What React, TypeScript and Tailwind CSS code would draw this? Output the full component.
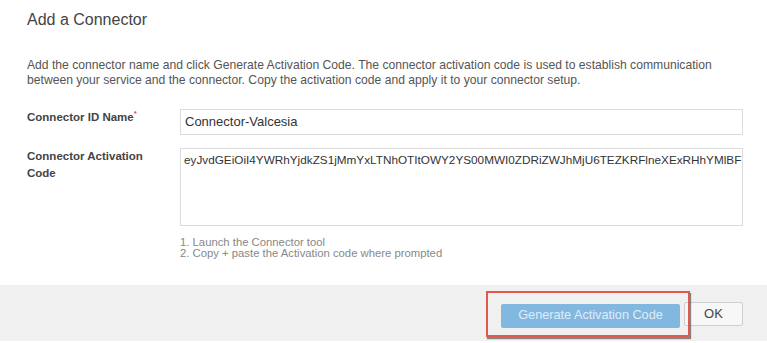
export default function App() {
  return (
    <div
      className="w-[767px] h-[343px] bg-white flex flex-col overflow-hidden"
      style={{ fontFamily: '"Liberation Sans", Arial, sans-serif' }}
    >
      <div className="pl-[27px] pr-[24px] flex-1">
        <h1 className="text-[16px] leading-[20px] text-[#444] pt-[10px]">Add a Connector</h1>
        <p className="mt-[28px] text-[12.15px] leading-[15px] text-[#555] w-[716px]">
          Add the connector name and click Generate Activation Code. The connector activation code is used to establish communication between your service and the connector. Copy the activation code and apply it to your connector setup.
        </p>
        <div className="mt-[21px] flex">
          <div className="w-[153px] shrink-0 text-[11.5px] leading-[17px] font-bold text-[#444]">
            Connector ID Name<span className="text-[#d9534f] align-top text-[8px] leading-[10px]">*</span>
          </div>
          <div className="w-[563px] shrink-0 h-[26px] border border-[#dcdcdc] px-[4px] flex items-center text-[13px] text-[#333]">
            Connector-Valcesia
          </div>
        </div>
        <div className="mt-[13px] flex">
          <div className="w-[153px] shrink-0 text-[11.5px] leading-[17px] font-bold text-[#444]">
            Connector Activation
            <br />
            Code
          </div>
          <div className="w-[563px] shrink-0">
            <div className="h-[78px] border border-[#dcdcdc] px-[3px] pt-[3px] text-[11.75px] leading-[16px] text-[#333] whitespace-nowrap overflow-hidden">
              eyJvdGEiOiI4YWRhYjdkZS1jMmYxLTNhOTItOWY2YS00MWI0ZDRiZWJhMjU6TEZKRFlneXExRHhYMlBF
            </div>
            <div className="mt-[11px] text-[11.3px] leading-[10.5px] text-[#888]">
              <div>1. Launch the Connector tool</div>
              <div>2. Copy + paste the Activation code where prompted</div>
            </div>
          </div>
        </div>
      </div>
      <div className="h-[56px] mb-[2px] bg-[#f0f0f0] flex items-start justify-end pr-[24px] pt-[17px] gap-[4px]">
        <div className="relative">
          <button className="w-[179px] h-[24px] bg-[#80b8e0] text-[#e0ecf7] text-[12.7px] rounded-[2px]">
            Generate Activation Code
          </button>
          <div className="absolute left-[-15px] right-[-10px] top-[-11px] bottom-[-9px] border-2 border-[#e2584a] shadow-[1px_2px_1px_rgba(0,0,0,0.45)] pointer-events-none" />
        </div>
        <button className="w-[59px] h-[24px] bg-[#f7f7f7] border border-[#cfcfcf] text-[#444] text-[13px] rounded-[2px]">
          OK
        </button>
      </div>
    </div>
  );
}
